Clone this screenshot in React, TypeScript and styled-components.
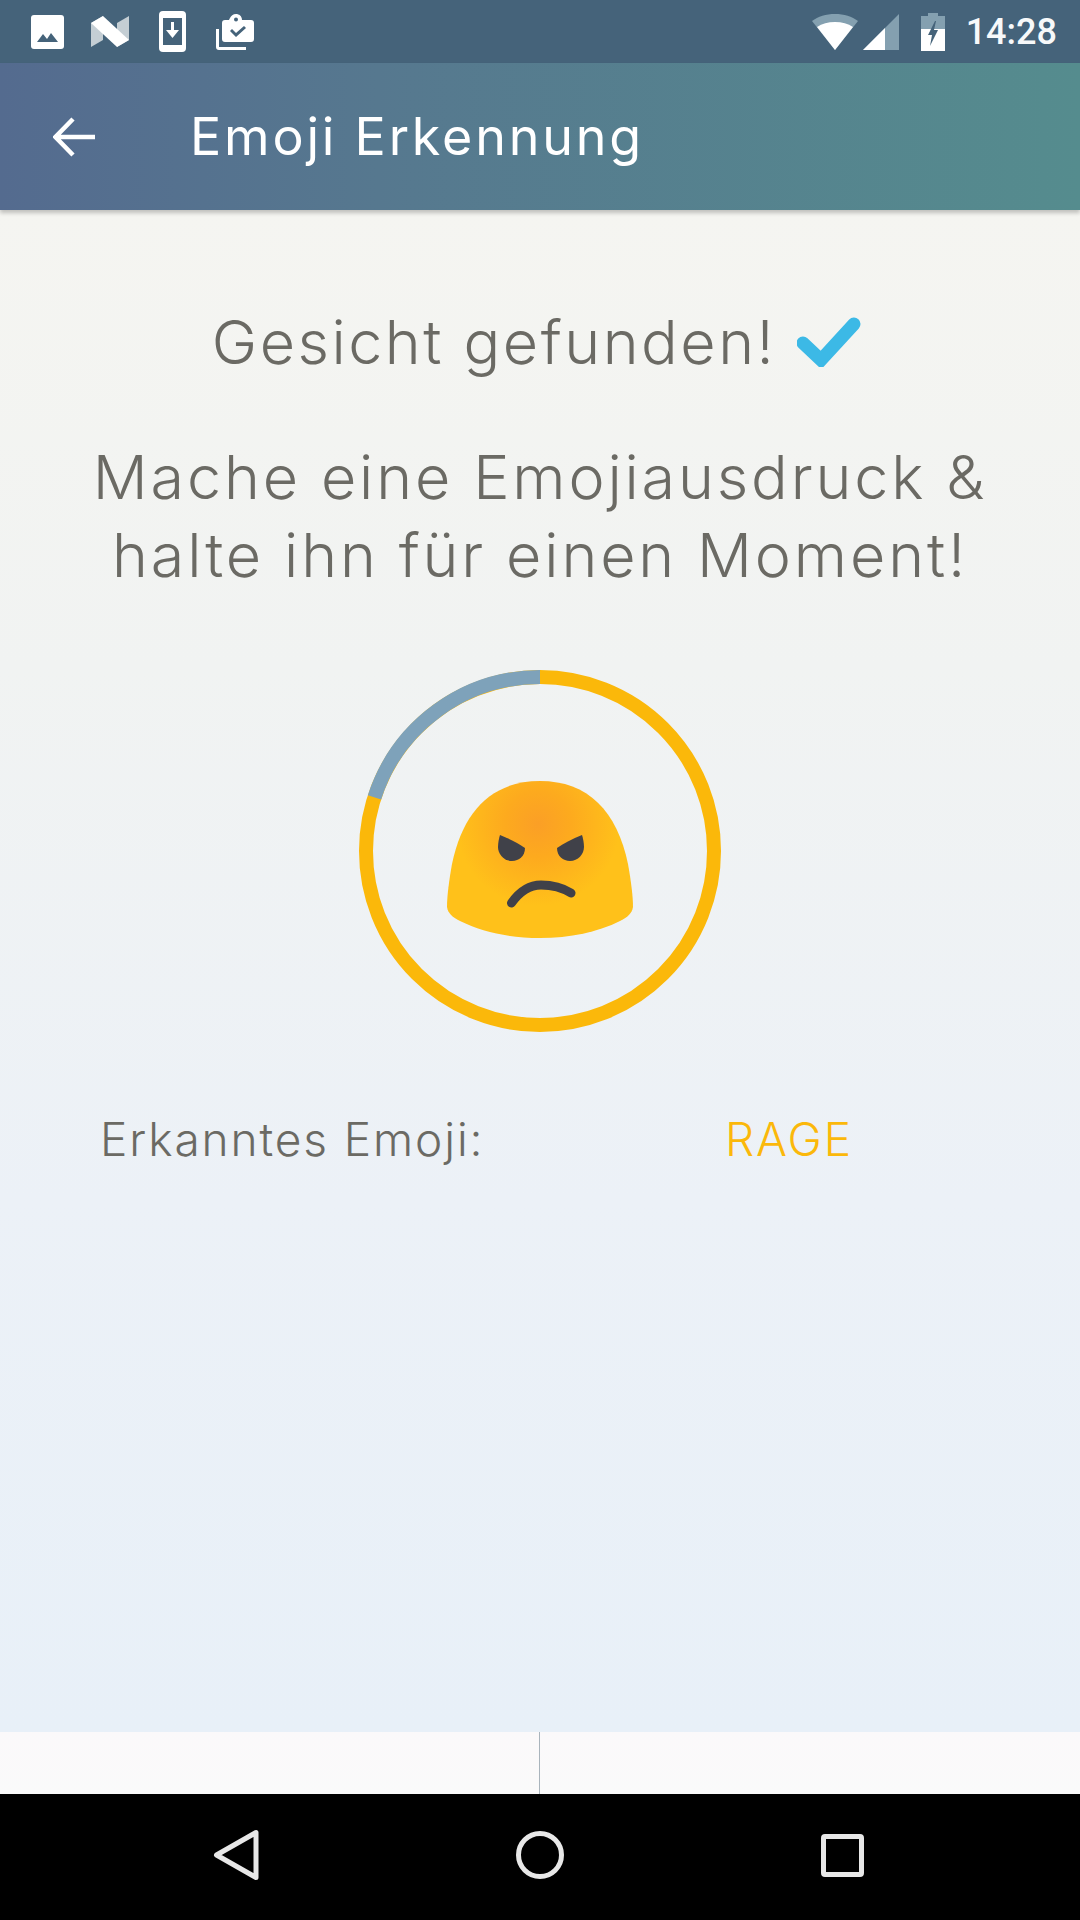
import React from "react";
import styled, { createGlobalStyle } from "styled-components";

const GlobalStyle = createGlobalStyle`
  html, body {
    margin: 0;
    padding: 0;
    width: 1080px;
    height: 1920px;
    overflow: hidden;
    font-family: "Inter", "Open Sans", sans-serif;
  }
`;

const Screen = styled.div`
  width: 1080px;
  height: 1920px;
  display: flex;
  flex-direction: column;
`;

const StatusBar = styled.div`
  height: 63px;
  flex: none;
  background: #45637a;
  display: flex;
  align-items: center;
  padding: 0 23px 0 31px;
  box-sizing: border-box;
`;

const StatusLeft = styled.div`
  display: flex;
  align-items: center;
  gap: 30px;
  flex: 1;
`;

const StatusRight = styled.div`
  display: flex;
  align-items: center;
`;

const Clock = styled.span`
  font-family: "Roboto", sans-serif;
  font-weight: 500;
  font-size: 36px;
  color: #f7f9fa;
  margin-left: 21px;
`;

const AppBar = styled.header`
  height: 147px;
  flex: none;
  background: linear-gradient(90deg, #546b8f 0%, #56788f 35%, #558c8e 100%);
  display: flex;
  align-items: center;
  padding-left: 53px;
  box-shadow: 0 3px 4px rgba(0, 0, 0, 0.22);
  position: relative;
  z-index: 1;
`;

const Title = styled.h1`
  margin: 0 0 0 95px;
  font-size: 52px;
  font-weight: 400;
  color: #fff;
  letter-spacing: 2.8px;
`;

const Main = styled.main`
  flex: 1;
  background: linear-gradient(180deg, #f5f5f1 0%, #f1f3f2 30%, #ecf1f7 65%, #e8f0f8 100%);
  display: flex;
  flex-direction: column;
  align-items: center;
  padding-top: 96px;
  color: #6b6a64;
`;

const Found = styled.div`
  display: flex;
  align-items: center;
  gap: 21px;
  height: 72px;
  font-size: 61px;
  font-weight: 300;
  letter-spacing: 2.5px;
  margin-left: -7px;
`;

const Prompt = styled.p`
  margin: 60px 0 0;
  font-size: 61px;
  font-weight: 300;
  line-height: 78px;
  letter-spacing: 2.85px;
  text-align: center;
`;

const RingWrap = styled.div`
  width: 362px;
  height: 362px;
  margin-top: 76px;
  flex: none;
`;

const ResultRow = styled.div`
  align-self: stretch;
  display: grid;
  grid-template-columns: 625px auto;
  padding-left: 100px;
  margin-top: 80px;
  font-size: 46px;
  font-weight: 300;
  line-height: 54px;
  letter-spacing: 1.9px;
`;

const ResultValue = styled.span`
  color: #fbb80a;
`;

const ActionBar = styled.div`
  height: 62px;
  flex: none;
  background: linear-gradient(180deg, #fbf9fa 0%, #fafafa 100%);
  display: grid;
  grid-template-columns: 539px 1fr;
`;

const ActionCell = styled.div<{ $divider?: boolean }>`
  border-left: ${(p) => (p.$divider ? "1px solid #a9b4bc" : "none")};
`;

const NavBar = styled.nav`
  height: 126px;
  flex: none;
  background: #000;
  display: flex;
  align-items: center;
  padding-bottom: 4px;
  box-sizing: border-box;
  padding-left: 213px;
  gap: 255px;
`;

const Icon = styled.svg<{ $shift?: number }>`
  display: block;
  flex: none;
  margin-left: ${(p) => p.$shift ?? 0}px;
`;

const ImageIcon = () => (
  <Icon width="33" height="34" viewBox="0 0 33 34">
    <rect width="33" height="34" rx="3" fill="#fff" />
    <path d="M6 27l6-8 4 5 4-6 7 9z" fill="#45637a" />
  </Icon>
);

const NougatIcon = () => (
  <Icon width="38" height="31" viewBox="0 0 38 31" $shift={-3}>
    <path d="M0 7l12-7v24L0 31z" fill="#c4ced4" />
    <path d="M26 7l12-7v24l-12 7z" fill="#c4ced4" />
    <path d="M0 7L12 0l26 24-12 7z" fill="#fff" />
  </Icon>
);

const PhoneDownloadIcon = () => (
  <Icon width="27" height="41" viewBox="0 0 27 41">
    <rect width="27" height="41" rx="4" fill="#fff" />
    <rect x="4" y="7" width="19" height="27" fill="#45637a" />
    <path d="M12 11h3v8h5l-6.500 8L7 19h5z" fill="#fff" />
  </Icon>
);

const WorkCheckIcon = () => (
  <Icon width="38" height="36" viewBox="0 0 38 36">
    <path d="M0 15v18a3 3 0 0 0 3 3h27v-3H3V15z" fill="#fff" />
    <path
      d="M13 6a7 7 0 0 1 1-2c1-2 3-4 6-4s6 2 6 6h9a3 3 0 0 1 3 3v16a3 3 0 0 1-3 3H9a3 3 0 0 1-3-3V9a3 3 0 0 1 3-3z"
      fill="#fff"
    />
    <circle cx="20" cy="5.500" r="2" fill="#45637a" />
    <path d="M14 17l2-2 4 4 8-7 2 2-10 9z" fill="#45637a" />
  </Icon>
);

const WifiIcon = () => (
  <Icon width="46" height="36" viewBox="0 0 46 36">
    <path d="M23 36L0 7C6 2.500 14 0 23 0s17 2.500 23 7z" fill="#84a0b0" />
    <path d="M23 36L5 13c5-3.500 11-5 18-5s13 1.500 18 5z" fill="#fff" />
  </Icon>
);

const SignalIcon = () => (
  <Icon width="36" height="36" viewBox="0 0 36 36" $shift={5}>
    <path d="M0 36L36 0v36z" fill="#84a0b0" />
    <path d="M0 36L22 14v22z" fill="#fff" />
  </Icon>
);

const BatteryIcon = () => (
  <Icon width="24" height="38" viewBox="0 0 24 38" $shift={22}>
    <path d="M7 0h10v3h7v35H0V3h7z" fill="#84a0b0" />
    <path d="M0 16h24v22H0z" fill="#fff" />
    <path d="M14 8l-7 14h4l-2 11 8-16h-4l2-9z" fill="#45637a" />
  </Icon>
);

const BackArrow = () => (
  <Icon width="42" height="40" viewBox="0 0 42 40">
    <path d="M42 20H4M20 2L2.500 20 20 38" fill="none" stroke="#fff" strokeWidth="4.500" />
  </Icon>
);

const CheckMark = () => (
  <Icon width="64" height="50" viewBox="0 0 64 50">
    <path d="M6 26l18 17L57 7" fill="none" stroke="#3cb9e6" strokeWidth="13" strokeLinecap="round" strokeLinejoin="miter" />
  </Icon>
);

const RADIUS = 174;
const CIRCUMFERENCE = 2 * Math.PI * RADIUS;

const ProgressRing = () => (
  <Icon width="362" height="362" viewBox="0 0 362 362">
    <circle cx="181" cy="181" r={RADIUS} fill="none" stroke="#fbb80a" strokeWidth="14" />
    <circle
      cx="181"
      cy="181"
      r={RADIUS}
      fill="none"
      stroke="#7ea2ba"
      strokeWidth="14"
      strokeDasharray={`${CIRCUMFERENCE * 0.2} ${CIRCUMFERENCE}`}
      transform="rotate(-90 181 181) scale(1 -1) translate(0 -362)"
    />
    <defs>
      <radialGradient id="rage" cx="179" cy="154" r="82" gradientUnits="userSpaceOnUse">
        <stop offset="0" stopColor="#fb9f26" />
        <stop offset="0.4" stopColor="#fdaa1e" />
        <stop offset="1" stopColor="#ffc11a" />
      </radialGradient>
    </defs>
    <path
      d="M181 111C133 111 104 141 93 194C90 211 88 226 88 237C89 243 93 247 101 251C123 262 151 268 181 268C211 268 239 262 261 251C269 247 273 243 274 237C274 226 272 211 269 194C258 141 229 111 181 111Z"
      fill="url(#rage)"
    />
    <path d="M141 165C151 169 159 173 166 178C166 186 160 191 153 191C145 191 139 184 139 177C139 173 140 168 141 165Z" fill="#404149" />
    <path d="M223 165C213 169 205 173 198 178C198 186 204 191 211 191C219 191 225 184 225 177C225 173 224 168 223 165Z" fill="#404149" />
    <path d="M152.500 233C161 221 171 215 182 215C193 215 204 218 212 223" fill="none" stroke="#404149" strokeWidth="9" strokeLinecap="round" />
  </Icon>
);

const NavBack = () => (
  <Icon width="46" height="52" viewBox="0 0 46 52">
    <path d="M43 3.500v45L3.500 26z" fill="none" stroke="#e8e8e8" strokeWidth="5" strokeLinejoin="round" />
  </Icon>
);

const NavHome = () => (
  <Icon width="48" height="48" viewBox="0 0 48 48" $shift={2}>
    <circle cx="24" cy="24" r="21.500" fill="none" stroke="#e8e8e8" strokeWidth="5" />
  </Icon>
);

const NavRecents = () => (
  <Icon width="43" height="43" viewBox="0 0 43 43" $shift={2}>
    <rect x="2.500" y="2.500" width="38" height="38" rx="1.500" fill="none" stroke="#e8e8e8" strokeWidth="5" />
  </Icon>
);

export default function App() {
  return (
    <Screen>
      <GlobalStyle />
      <StatusBar>
        <StatusLeft>
          <ImageIcon />
          <NougatIcon />
          <PhoneDownloadIcon />
          <WorkCheckIcon />
        </StatusLeft>
        <StatusRight>
          <WifiIcon />
          <SignalIcon />
          <BatteryIcon />
          <Clock>14:28</Clock>
        </StatusRight>
      </StatusBar>
      <AppBar>
        <BackArrow />
        <Title>Emoji Erkennung</Title>
      </AppBar>
      <Main>
        <Found>
          Gesicht gefunden!
          <CheckMark />
        </Found>
        <Prompt>
          Mache eine Emojiausdruck &amp;
          <br />
          halte ihn für einen Moment!
        </Prompt>
        <RingWrap>
          <ProgressRing />
        </RingWrap>
        <ResultRow>
          <span>Erkanntes Emoji:</span>
          <ResultValue>RAGE</ResultValue>
        </ResultRow>
      </Main>
      <ActionBar>
        <ActionCell />
        <ActionCell $divider />
      </ActionBar>
      <NavBar>
        <NavBack />
        <NavHome />
        <NavRecents />
      </NavBar>
    </Screen>
  );
}
